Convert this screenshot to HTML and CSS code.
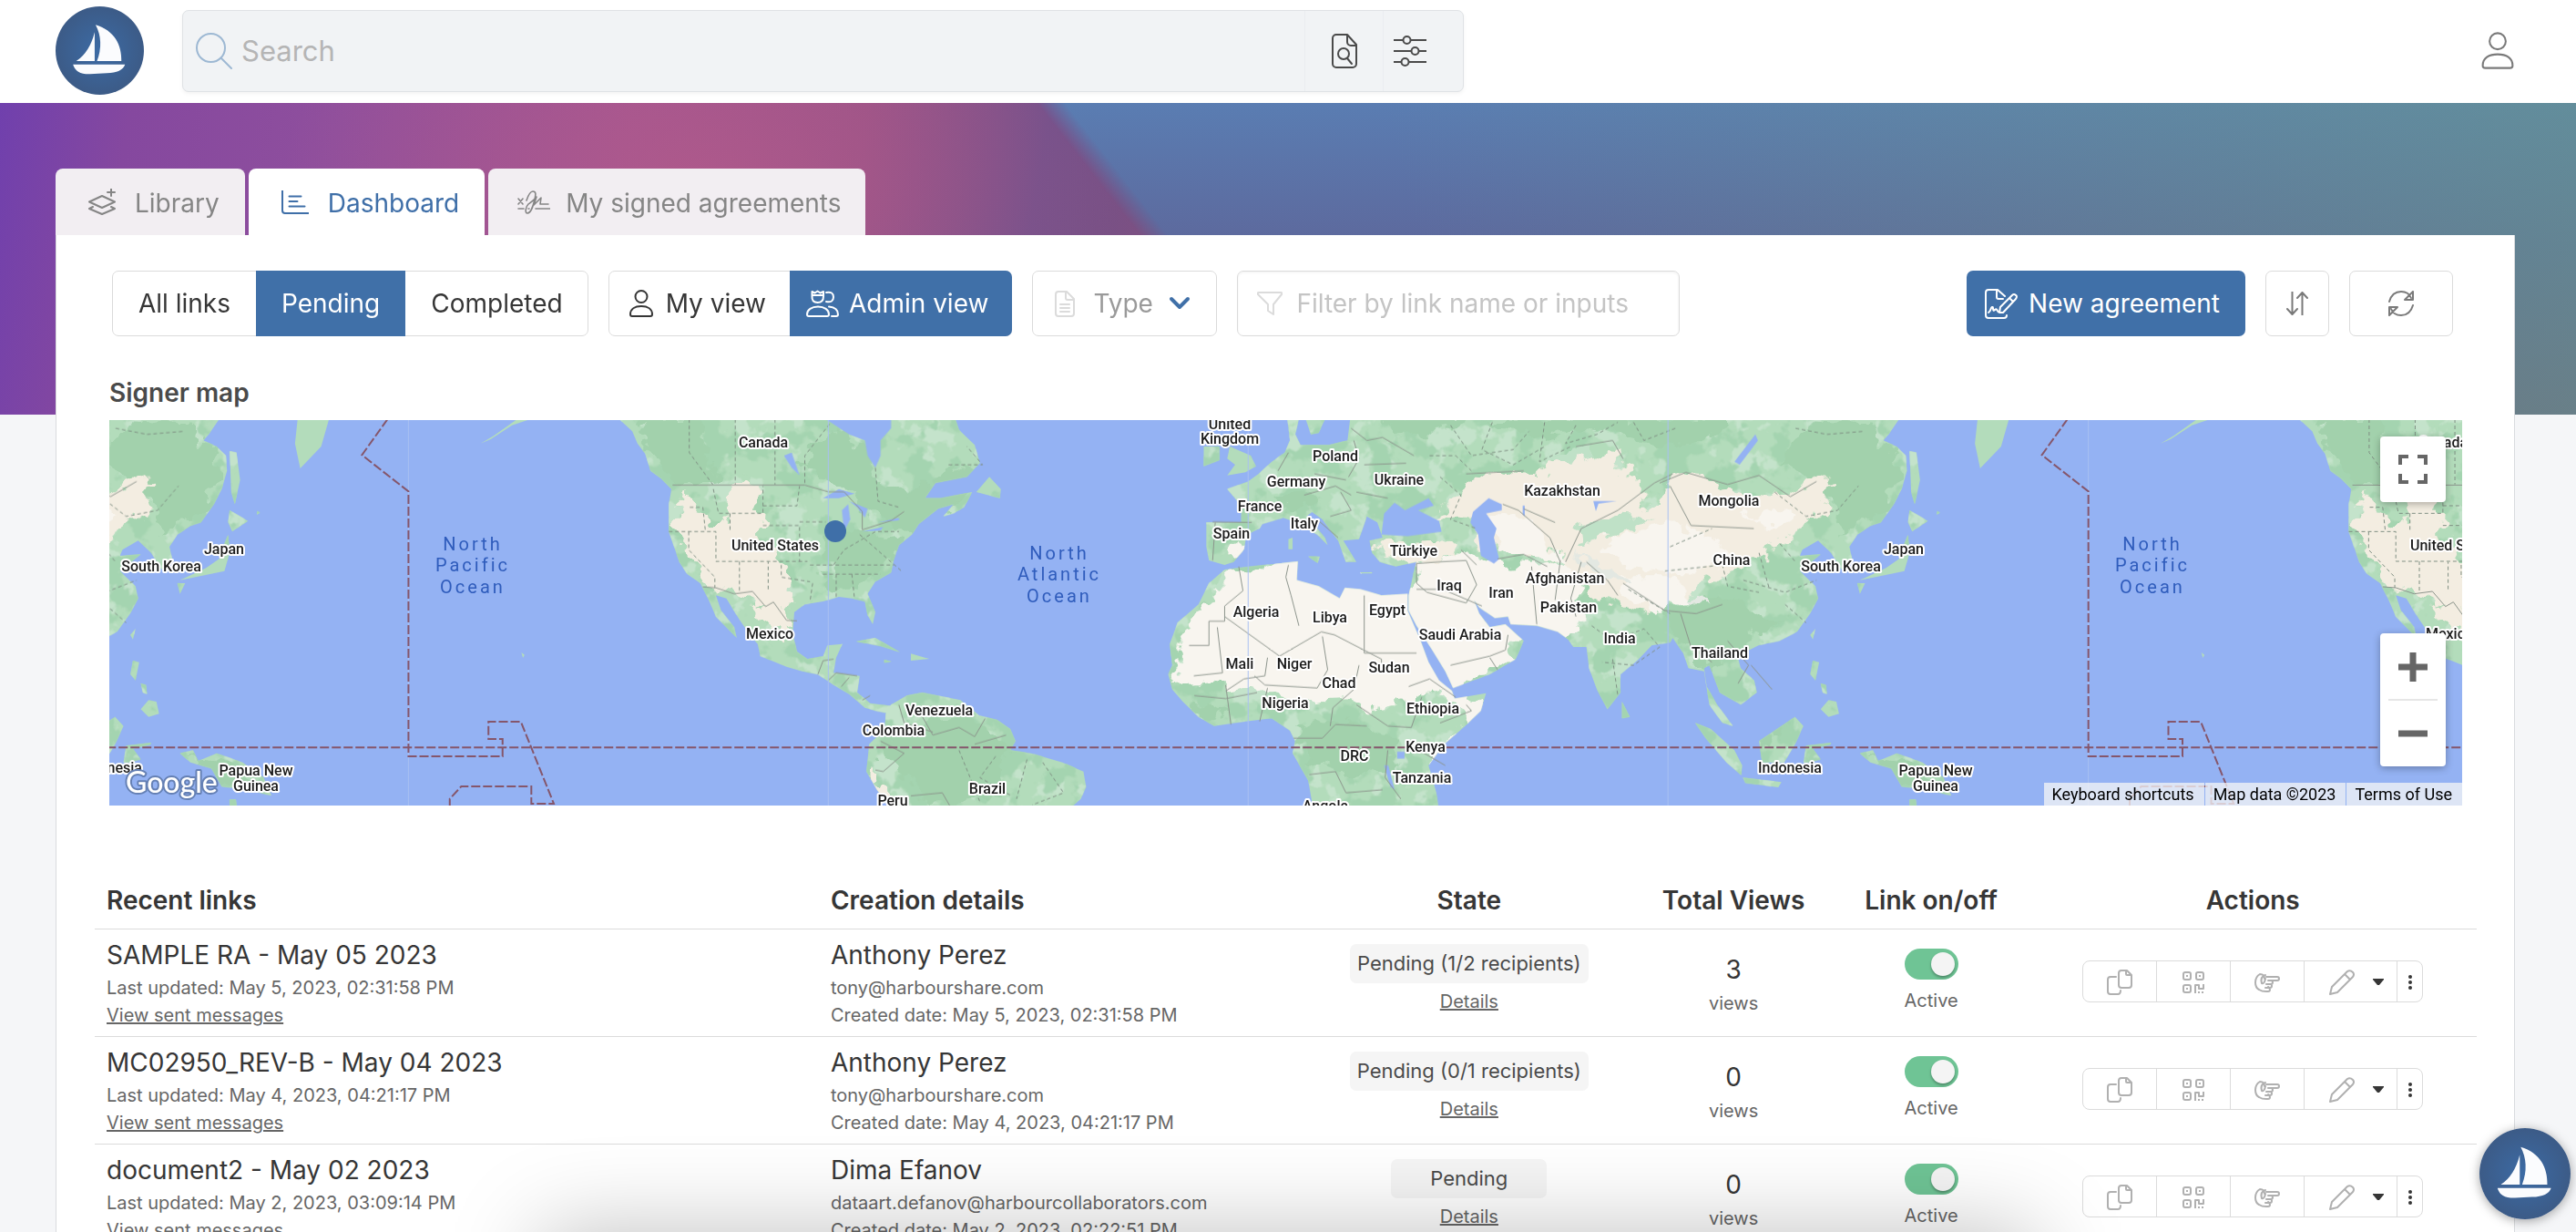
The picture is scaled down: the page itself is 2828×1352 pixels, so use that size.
FILE: index.html
```html
<!DOCTYPE html>
<html lang="en">
<head>
<meta charset="utf-8">
<title>Dashboard</title>
<link rel="stylesheet" href="styles.css">
</head>
<body>
<svg class="sprite" aria-hidden="true">
  <defs>
    <radialGradient id="disc"><stop offset="0" stop-color="#3c6ba5"/><stop offset="1" stop-color="#3c5b87"/></radialGradient>
    <symbol id="i-boat" viewBox="0 0 96 96">
      <circle cx="48" cy="48" r="48" fill="url(#disc)"/>
      <path fill="#fbfcfe" d="M42.500 28v31.500H22.500Q37 50 42.500 28zM43.500 20C64 26 72 42 71.500 59.500H45Q53 38 43.500 20zM19 63h56.500q-3 9-20 9.500l-18 1Q22 74 19 63z"/>
    </symbol>
    <symbol id="i-search" viewBox="0 0 40 40"><circle cx="16.500" cy="16.500" r="15.500"/><path d="M27.500 27.500 39 39"/></symbol>
    <symbol id="i-filesearch" viewBox="0 0 28 38"><path d="M17 1H5a4 4 0 0 0-4 4v28a4 4 0 0 0 4 4h18a4 4 0 0 0 4-4V12zM17 1v8a4 4 0 0 0 4 4h6"/><circle cx="13" cy="22" r="6"/><path d="m17 27 5 6"/></symbol>
    <symbol id="i-sliders" viewBox="0 0 36 34"><path d="M0 5h10m9 0h17M0 17h19m9 0h8M0 29h8m9 0h19"/><circle cx="14.500" cy="5" r="4"/><circle cx="23.500" cy="17" r="4"/><circle cx="12.500" cy="29" r="4"/></symbol>
    <symbol id="i-user" viewBox="0 0 26 30"><circle cx="13" cy="7.500" r="6.500"/><path d="M1 27c0-6 5-9 12-9s12 3 12 9q0 2-2 2H3q-2 0-2-2z"/></symbol>
    <symbol id="i-admin" viewBox="0 0 36 30"><path d="M6.500 2 9.500 3.500 12.500 1.500 15.500 3.500 19 2V7q0 7-6.500 7T6.500 7zM6.500 6h12.500M1 27c0-5 5-8.500 12-8.500S25 22 25 27q0 2-2 2H3q-2 0-2-2zM22 3q8-1.500 8 5t-8 5M25 18.500q10 1 10 8.500 0 2-2 2h-5"/></symbol>
    <symbol id="i-layers" viewBox="0 0 30 29"><path d="M1 14.500 15 8l14 6.500L15 21zM5 20l-4 2 14 6 14-6-4-2M25 0v8M21 4h8"/></symbol>
    <symbol id="i-chart" viewBox="0 0 30 26"><path d="M1 0v22q0 3 3 3h26M8.500 6.500h13M8.500 12h9M8.500 17.500h17"/></symbol>
    <symbol id="i-sign" viewBox="0 0 36 26"><path d="m1 9 5 6m0-6-5 6M1 20h6M12 20h1M20 20h16M10 11c2-6 4-10 7-10 4 0 3 4 2 9-2 8-4 15-8 15-3 0-2-7 1-10 3-2 5-3 9-8l-3 9 8-8-1 7h9"/></symbol>
    <symbol id="i-file" viewBox="0 0 22 29"><path d="M13 1H4a3 3 0 0 0-3 3v21a3 3 0 0 0 3 3h14a3 3 0 0 0 3-3V9zM12 1v7a2 2 0 0 0 2 2h7M6 15h10M6 19h10M6 23h10"/></symbol>
    <symbol id="i-funnel" viewBox="0 0 28 26"><path d="M2 1h24q2 0 1 2L18 14v11l-6-4v-7L1 3Q0 1 2 1z"/></symbol>
    <symbol id="i-chevron" viewBox="0 0 24 16"><path d="m3 3 9 9 9-9"/></symbol>
    <symbol id="i-newdoc" viewBox="0 0 36 33"><path d="M14 1H4a3 3 0 0 0-3 3v25a3 3 0 0 0 3 3h17a3 3 0 0 0 3-3M14 1l8 7M13 1v8q0 2 2 2h5M4 26c3-2 2-5 4-6s0 6 3 3 2 3 5 3h4l14-15q2-3 0-4-2-2-4 0L17 20l-1 6M27 10l4 4"/></symbol>
    <symbol id="i-sort" viewBox="0 0 24 26"><path d="M6.500 0v24M1 19l5.500 6L12 19M17.500 26V2M12 7l5.500-6L23 7"/></symbol>
    <symbol id="i-refresh" viewBox="0 0 30 28"><path d="M2 12C4 5 9 1 15 1c5 0 9 2 11 7M28 1v9h-9zM28 16c-2 7-7 11-13 11-5 0-9-2-11-7M2 27v-9h9z"/></symbol>
    <symbol id="i-copy" viewBox="0 0 28 28"><path d="M13 5V4a3 3 0 0 1 3-3h6l5 5v11a3 3 0 0 1-3 3h-8a3 3 0 0 1-3-3zM21 1v4q0 1 1 1h5M10 8H4a3 3 0 0 0-3 3v13a3 3 0 0 0 3 3h8q3 0 3-4"/></symbol>
    <symbol id="i-qr" viewBox="0 0 24 24"><rect x="1" y="1" width="8" height="8" rx="2"/><rect x="15" y="1" width="8" height="8" rx="2"/><rect x="1" y="15" width="8" height="8" rx="2"/><path d="M4 5h2M18 5h2M4 19h2M14 24v-9h4v4h5v-5M17 23h2M21 23h2"/></symbol>
    <symbol id="i-hand" viewBox="0 0 28 22"><path d="M13 5h12q2 0 2 2t-2 2H15M11 7q0-5-5-5-5 3-5 9t4 8q3 2 8 2h2q2 0 2-2t-2-3M12 3q-6 2-4 9 3 1 4-5M15 9h3q2 0 2 2t-2 2h-5M13 13h5q1 0 1 2t-2 2h-5"/></symbol>
    <symbol id="i-pencil" viewBox="0 0 28 28"><path d="M1 27l2-8L20 2q3-2 6 1 2 2 0 5L9 25zM17 5l6 6"/></symbol>

    <!-- Uneven edges and mottled vegetation for the map -->
    <filter id="rough" filterUnits="userSpaceOnUse" x="900" y="40" width="2700" height="1320">
      <feTurbulence type="fractalNoise" baseFrequency=".03 .018" numOctaves="3" seed="4"/>
      <feDisplacementMap in="SourceGraphic" scale="70" xChannelSelector="R" yChannelSelector="G"/>
    </filter>
    <filter id="mottle-dark" filterUnits="userSpaceOnUse" x="900" y="40" width="2700" height="1320" color-interpolation-filters="sRGB">
      <feTurbulence type="fractalNoise" baseFrequency=".018 .01" numOctaves="4" seed="11"/>
      <feColorMatrix values="0 0 0 0 .645  0 0 0 0 .83  0 0 0 0 .69  14 0 0 0 -7.300"/>
    </filter>
    <filter id="mottle-light" filterUnits="userSpaceOnUse" x="900" y="40" width="2700" height="1320" color-interpolation-filters="sRGB">
      <feTurbulence type="fractalNoise" baseFrequency=".022 .012" numOctaves="4" seed="27"/>
      <feColorMatrix values="0 0 0 0 .77  0 0 0 0 .89  0 0 0 0 .795  14 0 0 0 -7.600"/>
    </filter>

    <!-- Coastlines on a 3213-unit wide grid -->
    <g id="land" fill="#b3dcbb">
      <path d="M1010 60l25 40 10 40 15 35 10 55 20 25 20 35-5 50v90l10 50 10 50 15 40 25 30 15 50 15 60 20 35 20 35-5-35-25-55-10-50 20 10 25 70 22 55 13 25 5 40 50 35 30 15 30 10 30 35 30 30 30 45 20 10 30 10 5-25-45-10-25-35 5-55-50-10 5-50 12-45-29 5-8 35-30 10-20-25-8-60 3-70 20-25 35-10 30-15 25 5 25 10 5 45 10 30 5-40-15-60 15-40 30-30 5-40 10-50 25-35 13-35 37-50 30-15-20 40 20-10 20-20 15-50-30 10-30 10-30 0 20-50 60-20 25-45-10-60-30-50-10-50z"/>
      <path d="M1520 1030l10-30 30-30 30-10 73 25 35 50 35 15 25 30 10 40-10 30 40 10 60 30 40 30 5 50-10 40-20 30h-345l-25-60-20-60 5-90 30-50z"/>
      <path d="M745 140l20-15 40-45 35-20h-25l-45 55zM1463 792l37-12 47 47-37-20zM1568 832l35 17-35 6zM1517 852l14 6-14 4zM823 828l6 8-3 10zM1693 300l25-50 22 40-2 30z"/>
      <g transform="translate(1568)">
        <path d="M600 555l50-10 90-17-2 62 42 20 40 40 10-35 30 5 40 20 50-5v55l25 100 15 70 20 60 25 35 5 25 60-18-10 58-30 50-40 60-30 70 15 90 5 60H770l-10-100-30-90 5-40-10-35-35-40-50 10-60 15-30-30-30-50-20-40-8-50 8-30-5-70 15-70 40-60 20-70z"/>
        <path d="M600 540l-30-15-5-45v-80h67v-55l-27-55 40-25 20-25 25-40 25-30 10-40-5-70h22l-7 50 10 35h55l35-15 5-70h1050l-20 50-10 20 25 20 18 30 2 50-10 60-15 50-25 60-20 12-25 28-15 40 5 40-20 35-20-55-25-40-30 30-5 20 40-5-40 55 30 50 5 40-15 50-25 60-34 30-40 15-40 35 6 40 26 40 5 40-31 40-40-40-20-90-10 10 5 60 20 60 30 70-20-10-25-60-10-110-30-10-10-50-20-50-5 15-35 10-25 45-35 50v60l-25 55-20-65-15-70-5-70h-25l-10-25-20-25-40-20-50-5-5-25-25 5-30-35-10-25 10 45 20 45 30-10 35 55-15 60-50 50-70 45-15-55-25-70-30-80-15-50v-50l10-80 5-30-40 15-30-15-15-30-5-40 25-10-10-50-20-20-15 75-30 5 25 70h-20l-15-70-30-70-20-25-10 15 35 70 5 25-20-35-40-40-25-15-40 20-5 15-25 20-5 50-20 40z"/>
        <path d="M610 150l40 30 10 35-20 20-35 10 15-35-15-20zM560 150h30v45l-30 20zM755 60h37l-12 45-15 5zM722 455l8-5v38h-8zM760 512h22l-4 22zM860 564h22v4h-22zM1360 990l15 50-15 5zM1500 1060l30 20 45 70 15 50-2 32-28-42-40-80zM1591 1240l74 15-6 17-63-14zM1622 1120l69-80 16 30-16 60-21 60h-42zM1707 1190l5-55 48-10-2 7-33 13 15 35-20 10z"/>
        <g transform="translate(1645)">
          <path d="M265 360l35 35-30 35-8-30zM262 440l3 60-10 60-55 20-30 10 50-40 25-30 10-50zM165 600h15l-10 35zM265 165l13 5 7 90-10 80-7-40zM395 60h60l-15 90-40 72-10-82zM85 750l-5 35-5-15zM80 855l12 5-7 60-10-20zM95 930l10 5 2 30-8-5zM110 985l15 5 5 40-20 10-15-25zM170 1160l25-10 10 35 35-25 50 30 40 50 15 60-45-20-50-10-20-60-40-20zM265 1312h12l2 30h-14zM318 362l5 6-6 6z"/>
        </g>
      </g>
    </g>
    <mask id="onland" maskUnits="userSpaceOnUse" x="900" y="40" width="2700" height="1320"><use href="#land"/></mask>

    <g id="world">
      <use href="#land"/>
      <g mask="url(#onland)">
        <rect x="900" y="40" width="2700" height="1320" filter="url(#mottle-light)"/>
        <rect x="900" y="40" width="2700" height="1320" filter="url(#mottle-dark)"/>
        <!-- woodland -->
        <g fill="#a2d1ac" filter="url(#rough)">
          <path d="M1045 60h110l30 110 15 100h-80l-25-40-25-60zM1365 200l60-110 50 60 30 110 60 60 80-110 60 30-40 80-90 130-55-50-50-60-50-60zM1400 420l60 10 90 20-30 110-60 60-50-10zM1500 1150l60-90 110-20 60 60 30 80-30 120-120 30-70-120z"/>
          <g transform="translate(1568)">
            <path d="M900 60h160l-30 40-90 10zM1100 60h460l-30 60-90 40-60-50-110-20-60 40-70-50zM730 1080l60-30 80 20 60 40-20 110-80 10-70-50zM1450 690l100-60 60 60 60 40-100 80-40 90-70-130zM1720 70l130 10 40 140-20 130-90 90-20-130-90-110zM700 320l60-20 20 40-60 15zM530 990l80 30-40 40zM1590 1090l80-30-20 90zM1825 1165l100 40 50 80-80-30z"/>
          </g>
        </g>
        <!-- dry land -->
        <g fill="#f3ede1" filter="url(#rough)">
          <path d="M1150 300l15 60 20 60 30-20 5-130 40 0 25 50-5 120 45 30-10 60 25 60-5 80 5 90-30-30-25-60-50-40-40-5-35-80-30-60-5-80-10-50zM1270 660l30 30 25 70-12 45-15-60-30-30zM1480 1200l15 30 25 80-40 0z"/>
          <g transform="translate(1568)">
            <path fill="#f8f5ef" d="M595 575l47-12 110-50 90 60 120 40 10 80 25 100 15 70 20 60 20 35 32 40 60-30-20 78-30 70-40 60-30 70-30-50 10-70 60-50-10-60-60-70-30 40-100 30-20-40-100 10-90-30-70-30-85 10 8-40-5-70 15-70 40-60z"/>
            <path fill="#f8f5ef" d="M945 640l25-80 5-32 60-20 10-30 40 40 40 20 60 10 60-20 40 40-15 90 30 40-60 90-190 0 100 0-15 75-60 60-76 32-25-55-25-70-30-80-15-50z"/>
            <path d="M900 470l120-10 20 40-60 30-50 10-25-20zM1050 280l80-50 60 10 50-60 60 0 50-20 20 80 30 60-10 80-90 40-70 70-50 40-40-60-40 30-10-70-20-50-50 0-20 30zM1230 520l20-100 60-20 120-60 40-100 50 10 60 50 100 10 60-70 30 40-40 110-70 70-40 70-60 30-90 90-60 40-80-30-60-90z"/>
            <path fill="#f8f5ef" d="M1100 370l50 0 60 70 30 80-60 0-50-30-20-60zM1340 440l120-40 80 60 30 60-80 50-120-20-40-50zM1350 580l110 0 30 80-50 30-80-50zM1590 380l90-30 20 20-50 60zM605 490l30-30 8 40-25 25z"/>
            <path fill="#bfe1c7" d="M1270 420l90-40 60 10-80 50-60 40zM580 590l20-30 12 5-15 50zM1210 180l80-30 20 20-50 40z"/>
            <path fill="#e3e8e2" d="M1270 500l50 40 40 60-20 0-40-50zM1480 645l25 0 20 30-20 0z"/>
          </g>
        </g>
      </g>
      <!-- inland water -->
      <g fill="#94b2f3">
        <path d="M1405 60l45 50 30 20 5 50 15 40 10-40v-50l20-40v-30zM1325 180l15-10 15 75-15-25zM1400 320l30-30 30 15-30 15zM1436 360l12-20 4 50-12 40zM1450 330l35 25-5 30-15-35zM1475 430l40-15-5 12zM1505 400l40-15v8z"/>
        <g transform="translate(1568)">
          <path d="M905 370l20-35 20 25 45-40 10 25-30 15 40 35 5 35-65 15-50-5zM1075 365l30-45 25 20v20l-30 10 20 50-5 30 10 70-10 15-25-25-5-70-15-40zM1305 330h45l-35 8-5 25zM930 1155h14v22h-14zM905 1200l8 0 12 80-8-10zM1170 345l4 0 0 35-4-5zM1575 200l40-90 5 20-35 80z"/>
        </g>
      </g>
      <!-- national borders -->
      <g class="map-border">
        <path d="M1112 277h253l45 22 30 0 35 65 0 60 55-30 25-30M1170 612l25 3 35 20 35-8 25 50 15-15 25 60 20 2M1390 900l10-45 20-5M1410 920l15-25 40 10M1435 940l15-30M1475 985l15-15M1510 1120l45 40-40 60-15-5M1590 1040l20 60 50-25 30 30 20-60M1690 1130l60-30M1545 1000l10 60 55 30M1568 1300l60-10 20 60"/>
        <path d="M2195 545l8 80-35 50v35l105 130 10-10 70-70 25 10 90 80v40M2290 540l-5 40 10 60 15 100M2435 640v190h100M2168 710v15h-30v80h-38M2154 745l10 150-55 10M2250 845l-5 60-40 10-35 40M2355 775l10 110-20 60-100-10-20-30M2425 870l-10 80-40 60-5 60M2520 940l40-25 50 60M2420 1000l60 70 45 5 20-100M2250 945l-15 110M2300 1110h55l25-45 60 5M2330 1230l50-10 20 70 70-10M2480 1150l-5 90 30 70M2530 1140l60 60M2580 1060l60-40-10-20M2170 935l10 130M2110 970l60 10 60-20"/>
        <path d="M2535 535l40-5 55-5 20 80-20 60-75-35-20-30zM2535 620l50 0 75 55M2600 870l75-30 30-20 5-50M2675 845l15 40M2620 490l30 50M2690 520l50-15 45 40M2755 545l10 190M2810 525l-10 130M2850 530l-20 120 10 60M2700 340l30 20 60 90 20 80M2740 355l60 45M2820 530l30-110 70-60 70-90 35-30M2930 600l80 90 60 10 50-30M2860 530l40 60 20 50M3000 270l50-35 80 40 60-30 60 70 50-50M3020 280l40 130 120 10M2410 90l30 40 30-10 60 60M2415 130l10 60-20 60M2340 240l60 20M2320 310l60-30 30 30M2220 400l-75-2M2150 400l-5 125M2390 300l20 60-40 20M2420 300l60 20M2740 230l-110 10M2840 150l70-20 20 60M3040 700l20 110 40 50M3130 790l40 80-20 60M3175 870l40 80M2290 170l-20 60M2345 390l40 60M2435 210l80-5"/>
      </g>
      <!-- state and province borders -->
      <g class="map-region">
        <path d="M1144 60v110l45 105M1232 60v215M1308 60v215M1365 270v-90l50-110M1145 350h25l5 80M1105 430h90v98h175M1143 430v60l50 90 0 35M1190 290l10 80h85v-90M1285 345h65l5-65M1285 410h70v120M1240 528v100M1295 620v-90M1320 540v40l55 15M1222 370v60M1355 398h50M1375 540h160M1380 600l-5 60M1400 570h110M1425 570v80M1455 570l5 80M1420 540l20-50 60-60h45M1500 220l5 110 40 20M1470 440l80 120"/>
        <path d="M1660 1150l40 170M1730 1170l-30 70 60 60M1790 1180l-20 130M1820 1190l40 100-60 40M1640 210h65l-30-60M2600 80l40 100 80-20 30-60M2680 70l-20 90 60 50 60-60M2780 70l-10 130 60-50M2840 80l-20 60 60-30 40-40M2950 70l20 60 60-40M2580 250l40 60-20 80 50 30M2560 180l50 0 30 50M2870 740l40 50 60-40 30 60-50 60-60-10M2910 850l10 120M2940 620l80 80M3020 480l80-60M3010 560l110-20 10 70 60 20M3160 590l80 40 60-40M3190 500l20 120M3230 470l30 60M3240 670l40 60M3260 90l60 20 70-10M3220 300l60 80 60-20 40-80"/>
      </g>
    </g>
    <path id="dateline" d="M567 60l-49 118 89 120v872h180v-57h-27v-57h62l63 270h-43v-57H708l-22 41v30"/>
  </defs>
</svg>

<header class="topbar">
  <a class="brand" href="#" aria-label="Home"><svg><use href="#i-boat"/></svg></a>
  <form class="search" role="search">
    <label class="search-label" for="q"><svg class="ic ic-search"><use href="#i-search"/></svg></label>
    <input id="q" type="text" placeholder="Search" aria-label="Search">
    <button class="search-doc" type="button" aria-label="Search in documents"><svg class="ic ic-filesearch"><use href="#i-filesearch"/></svg></button>
    <button class="search-opts" type="button" aria-label="Search options"><svg class="ic ic-sliders"><use href="#i-sliders"/></svg></button>
  </form>
  <button class="account" type="button" aria-label="Account"><svg class="ic ic-account"><use href="#i-user"/></svg></button>
</header>

<main class="page">
  <nav class="tabs">
    <a class="tab" href="#"><svg class="ic ic-layers"><use href="#i-layers"/></svg>Library</a>
    <a class="tab tab-on" href="#" aria-current="page"><svg class="ic ic-chart"><use href="#i-chart"/></svg>Dashboard</a>
    <a class="tab tab-signed" href="#"><svg class="ic ic-sign"><use href="#i-sign"/></svg>My signed agreements</a>
  </nav>

  <section class="card">
    <div class="toolbar">
      <div class="segments">
        <button type="button">All links</button>
        <button type="button" class="on">Pending</button>
        <button type="button">Completed</button>
      </div>
      <div class="segments segments-icons">
        <button type="button"><svg class="ic ic-user"><use href="#i-user"/></svg>My view</button>
        <button type="button" class="on"><svg class="ic ic-admin"><use href="#i-admin"/></svg>Admin view</button>
      </div>
      <div class="field type">
        <label for="type" aria-label="Type"><svg class="ic ic-file"><use href="#i-file"/></svg></label>
        <select id="type"><option>Type</option></select>
        <svg class="ic ic-chevron"><use href="#i-chevron"/></svg>
      </div>
      <div class="field filter">
        <label for="filter" aria-label="Filter"><svg class="ic ic-funnel"><use href="#i-funnel"/></svg></label>
        <input id="filter" type="text" placeholder="Filter by link name or inputs">
      </div>
      <button class="primary" type="button"><svg class="ic ic-newdoc"><use href="#i-newdoc"/></svg>New agreement</button>
      <button class="square sort" type="button" aria-label="Sort"><svg class="ic ic-sort"><use href="#i-sort"/></svg></button>
      <button class="square refresh" type="button" aria-label="Refresh"><svg class="ic ic-refresh"><use href="#i-refresh"/></svg></button>
    </div>

    <h2 class="map-title">Signer map</h2>
    <div class="map">
      <svg class="map-canvas" viewBox="120 461 2583 423" preserveAspectRatio="xMidYMid slice">
        <rect x="120" y="461" width="2583" height="423" fill="#94b2f3"/>
        <g transform="translate(100 440) scale(.574 .33333)">
          <use href="#world" x="-3213"/><use href="#world"/><use href="#world" x="3213"/>
          <path class="map-seam" d="M607 60v1300M1410 60v1300M2213 60v1300M3016 60v1300M3820 60v1300"/>
          <g class="map-dash"><path d="M30 1141H4540"/><use href="#dateline"/><use href="#dateline" x="3213"/></g>
        </g>
        <g class="map-label">
          <text x="246" y="608">Japan</text><text x="177" y="627">South Korea</text><text x="281" y="851">Papua New</text><text x="281" y="868">Guinea</text><text x="121" y="848">Indonesia</text>
          <text x="838" y="491">Canada</text><text x="851" y="604">United States</text><text x="845" y="701">Mexico</text>
          <text x="1031" y="785">Venezuela</text><text x="981" y="807">Colombia</text><text x="1084" y="871">Brazil</text><text x="980" y="884">Peru</text>
          <text x="1350" y="471">United</text><text x="1350" y="487">Kingdom</text><text x="1466" y="506">Poland</text><text x="1423" y="534">Germany</text><text x="1383" y="561">France</text><text x="1432" y="580">Italy</text><text x="1352" y="591">Spain</text><text x="1536" y="532">Ukraine</text><text x="1552" y="610">Türkiye</text>
          <text x="1715" y="544">Kazakhstan</text><text x="1898" y="555">Mongolia</text><text x="1901" y="620">China</text><text x="1591" y="648">Iraq</text><text x="1648" y="656">Iran</text><text x="1718" y="640">Afghanistan</text><text x="1722" y="672">Pakistan</text>
          <text x="1379" y="677">Algeria</text><text x="1460" y="683">Libya</text><text x="1523" y="675">Egypt</text><text x="1603" y="702">Saudi Arabia</text><text x="1778" y="706">India</text><text x="1888" y="722">Thailand</text>
          <text x="1361" y="734">Mali</text><text x="1421" y="734">Niger</text><text x="1470" y="755">Chad</text><text x="1525" y="738">Sudan</text><text x="1411" y="777">Nigeria</text><text x="1573" y="783">Ethiopia</text><text x="1565" y="825">Kenya</text><text x="1487" y="835">DRC</text><text x="1561" y="859">Tanzania</text><text x="1455" y="890">Angola</text>
          <text x="2090" y="608">Japan</text><text x="2021" y="627">South Korea</text><text x="1965" y="848">Indonesia</text><text x="2125" y="851">Papua New</text><text x="2125" y="868">Guinea</text>
          <text x="2682" y="491">Canada</text><text x="2694" y="604">United States</text><text x="2689" y="701">Mexico</text>
        </g>
        <g class="map-ocean">
          <text x="519" y="604">North</text><text x="519" y="627">Pacific</text><text x="519" y="651">Ocean</text>
          <text x="1163" y="614">North</text><text x="1163" y="637">Atlantic</text><text x="1163" y="661">Ocean</text>
          <text x="2363" y="604">North</text><text x="2363" y="627">Pacific</text><text x="2363" y="651">Ocean</text>
        </g>
        <circle cx="917" cy="583" r="12" fill="#3f6fa8"/>
        <text class="map-logo" x="138" y="870">Google</text>
      </svg>
      <button class="map-full" type="button" aria-label="Toggle fullscreen"><svg viewBox="0 0 32 32"><path d="M2 11V2h9M21 2h9v9M30 21v9h-9M11 30H2v-9"/></svg></button>
      <div class="map-zoom">
        <button type="button" aria-label="Zoom in"><svg viewBox="0 0 32 32"><path d="M0 16h32M16 0v32"/></svg></button>
        <button type="button" aria-label="Zoom out"><svg viewBox="0 0 32 32"><path d="M0 16h32"/></svg></button>
      </div>
      <div class="map-legal"><button type="button">Keyboard shortcuts</button><span>Map data ©2023</span><a href="#">Terms of Use</a></div>
    </div>

    <table class="links">
      <colgroup><col class="c-name"><col class="c-made"><col class="c-state"><col class="c-views"><col class="c-toggle"><col class="c-actions"></colgroup>
      <thead>
        <tr><th class="left">Recent links</th><th class="left">Creation details</th><th>State</th><th>Total Views</th><th>Link on/off</th><th>Actions</th></tr>
      </thead>
      <tbody>
        <tr>
          <td class="left"><div class="title">SAMPLE RA - May 05 2023</div><div class="meta">Last updated: May 5, 2023, 02:31:58 PM</div><a class="meta" href="#">View sent messages</a></td>
          <td class="left"><div class="title">Anthony Perez</div><div class="meta">tony@harbourshare.com</div><div class="meta">Created date: May 5, 2023, 02:31:58 PM</div></td>
          <td><div class="stack state"><span class="badge">Pending (1/2 recipients)</span><a class="meta" href="#">Details</a></div></td>
          <td><div class="stack views"><span class="count">3</span><span class="meta">views</span></div></td>
          <td><label class="stack switch"><input type="checkbox" checked><span class="meta">Active</span></label></td>
          <td><div class="actions">
            <button type="button" aria-label="Copy"><svg class="ic ic-copy"><use href="#i-copy"/></svg></button>
            <button type="button" aria-label="QR code"><svg class="ic ic-qr"><use href="#i-qr"/></svg></button>
            <button type="button" aria-label="Open"><svg class="ic ic-hand"><use href="#i-hand"/></svg></button>
            <button type="button" class="edit" aria-label="Edit"><svg class="ic ic-pencil"><use href="#i-pencil"/></svg><svg class="caret" viewBox="0 0 12 7"><path d="M0 0h12v1L7 7H5L0 1z"/></svg></button>
            <button type="button" class="more" aria-label="More"><svg class="dots" viewBox="0 0 4 16"><circle cx="2" cy="2" r="2"/><circle cx="2" cy="8" r="2"/><circle cx="2" cy="14" r="2"/></svg></button>
          </div></td>
        </tr>
        <tr>
          <td class="left"><div class="title">MC02950_REV-B - May 04 2023</div><div class="meta">Last updated: May 4, 2023, 04:21:17 PM</div><a class="meta" href="#">View sent messages</a></td>
          <td class="left"><div class="title">Anthony Perez</div><div class="meta">tony@harbourshare.com</div><div class="meta">Created date: May 4, 2023, 04:21:17 PM</div></td>
          <td><div class="stack state"><span class="badge">Pending (0/1 recipients)</span><a class="meta" href="#">Details</a></div></td>
          <td><div class="stack views"><span class="count">0</span><span class="meta">views</span></div></td>
          <td><label class="stack switch"><input type="checkbox" checked><span class="meta">Active</span></label></td>
          <td><div class="actions">
            <button type="button" aria-label="Copy"><svg class="ic ic-copy"><use href="#i-copy"/></svg></button>
            <button type="button" aria-label="QR code"><svg class="ic ic-qr"><use href="#i-qr"/></svg></button>
            <button type="button" aria-label="Open"><svg class="ic ic-hand"><use href="#i-hand"/></svg></button>
            <button type="button" class="edit" aria-label="Edit"><svg class="ic ic-pencil"><use href="#i-pencil"/></svg><svg class="caret" viewBox="0 0 12 7"><path d="M0 0h12v1L7 7H5L0 1z"/></svg></button>
            <button type="button" class="more" aria-label="More"><svg class="dots" viewBox="0 0 4 16"><circle cx="2" cy="2" r="2"/><circle cx="2" cy="8" r="2"/><circle cx="2" cy="14" r="2"/></svg></button>
          </div></td>
        </tr>
        <tr>
          <td class="left"><div class="title">document2 - May 02 2023</div><div class="meta">Last updated: May 2, 2023, 03:09:14 PM</div><a class="meta" href="#">View sent messages</a></td>
          <td class="left"><div class="title">Dima Efanov</div><div class="meta">dataart.defanov@harbourcollaborators.com</div><div class="meta">Created date: May 2, 2023, 02:22:51 PM</div></td>
          <td><div class="stack state"><span class="badge">Pending</span><a class="meta" href="#">Details</a></div></td>
          <td><div class="stack views"><span class="count">0</span><span class="meta">views</span></div></td>
          <td><label class="stack switch"><input type="checkbox" checked><span class="meta">Active</span></label></td>
          <td><div class="actions">
            <button type="button" aria-label="Copy"><svg class="ic ic-copy"><use href="#i-copy"/></svg></button>
            <button type="button" aria-label="QR code"><svg class="ic ic-qr"><use href="#i-qr"/></svg></button>
            <button type="button" aria-label="Open"><svg class="ic ic-hand"><use href="#i-hand"/></svg></button>
            <button type="button" class="edit" aria-label="Edit"><svg class="ic ic-pencil"><use href="#i-pencil"/></svg><svg class="caret" viewBox="0 0 12 7"><path d="M0 0h12v1L7 7H5L0 1z"/></svg></button>
            <button type="button" class="more" aria-label="More"><svg class="dots" viewBox="0 0 4 16"><circle cx="2" cy="2" r="2"/><circle cx="2" cy="8" r="2"/><circle cx="2" cy="14" r="2"/></svg></button>
          </div></td>
        </tr>
      </tbody>
    </table>
  </section>
</main>

<div class="dock-shadow"></div>
<button class="chat" type="button" aria-label="Help"><svg><use href="#i-boat"/></svg></button>
</body>
</html>
```
FILE: styles.css
```css
* { box-sizing: border-box; }

body {
  margin: 0;
  height: 100vh;
  display: flex;
  flex-direction: column;
  overflow: hidden;
  background: #f5f6f8;
  color: #363636;
  font-family: Inter, "Liberation Sans", sans-serif;
  font-size: 28px;
}

button, input, select { font: inherit; color: inherit; }
button { cursor: pointer; padding: 0; margin: 0; border: 0; background: none; }
a { color: inherit; }
.sprite { position: absolute; width: 0; height: 0; }
.ic { display: block; flex: none; fill: none; stroke: currentColor; stroke-width: 2; stroke-linecap: round; stroke-linejoin: round; overflow: visible; }

/* Top bar */
.topbar {
  flex: none;
  height: 113px;
  padding: 0 68px 2px 61px;
  display: flex;
  align-items: center;
  background: #fff;
}
.brand { width: 97px; height: 97px; margin-right: 42px; }
.brand svg, .chat svg { display: block; width: 100%; height: 100%; }
.search {
  width: 1407px;
  height: 90px;
  display: flex;
  align-items: stretch;
  background: #f1f3f5;
  border: 1px solid #dfe2e5;
  border-radius: 7px;
  box-shadow: 0 2px 4px rgba(0, 0, 0, .05);
}
.search-label { display: flex; align-items: center; padding: 0 10px 0 14px; color: #9db8d3; }
.ic-search { width: 40px; height: 40px; }
.search input { flex: 1; min-width: 0; border: 0; padding: 0; background: none; font-size: 31px; outline: 0; }
.search input::placeholder { color: #b5b5b5; opacity: 1; }
.search button { display: flex; align-items: center; border-left: 1px solid #ebedf0; color: #4a4a4a; }
.search-doc { width: 86px; padding-left: 29px; }
.search-opts { width: 88px; padding-left: 11px; }
.ic-filesearch { width: 28px; height: 38px; }
.ic-sliders { width: 36px; height: 34px; }
.account { margin-left: auto; color: #7a7a7a; }
.ic-account { width: 36px; height: 41px; stroke-width: 1.5; }

/* Page with the coloured banner behind the card */
.page { position: relative; flex: 1; min-height: 0; padding: 72px 67px 0 61px; overflow-y: auto; scrollbar-width: none; }
.page::before, .page::after { content: ""; position: absolute; z-index: -1; top: 0; left: 0; right: 0; height: 342px; }
.page::before {
  z-index: -2;
  background:
    radial-gradient(460px 300px at 770px 90px, rgba(180, 91, 138, .75), transparent),
    linear-gradient(100deg, #7040ad 0, #85489f 5%, #8f4f9d 13%, #9f5492 24%, #955287 33%, #72518b 40%, #80507f 46%);
}
.page::after {
  background:
    linear-gradient(75deg, transparent 55%, rgba(104, 152, 140, .6)),
    linear-gradient(180deg, #5a7db2, #5d699d 45%, #6a6083);
  -webkit-mask-image: linear-gradient(52deg, transparent 45.4%, #000 46.4%);
  mask-image: linear-gradient(52deg, transparent 45.4%, #000 46.4%);
}

.tabs { display: flex; gap: 4px; }
.tab {
  height: 73px;
  padding: 2px 28px 0 36px;
  display: flex;
  align-items: center;
  gap: 21px;
  border-radius: 8px 8px 0 0;
  background: #f2eef2;
  color: #858585;
  text-decoration: none;
  white-space: nowrap;
}
.tab-on { background: #fff; color: #3f6fa8; }
.tab-signed { gap: 17px; padding: 2px 26px 0 32px; }
.ic-layers { width: 30px; height: 29px; }
.ic-chart { width: 30px; height: 26px; }
.ic-sign { width: 36px; height: 26px; stroke-width: 1.6; }
.tab .ic { margin-top: -2px; }

.card { min-height: 1094px; padding: 39px 57px 0 58px; background: #fff; border: solid #d9dbde; border-width: 0 1px; }

/* Toolbar */
.toolbar { display: flex; align-items: stretch; gap: 22px; height: 72px; padding: 0 10px 0 3px; }
.segments { display: flex; border: 1px solid #dbdbdb; border-radius: 7px; }
.segments button { display: flex; align-items: center; justify-content: center; margin: -1px 0; padding: 0 28px; white-space: nowrap; }
.segments button:last-child { margin-right: -1px; border-radius: 0 7px 7px 0; }
.segments .on { background: #4070a8; color: #fff; }
.segments-icons button { padding: 0 26px 0 22px; gap: 14px; }
.segments-icons .on { padding-left: 18px; gap: 11px; }
.ic-user { width: 26px; height: 30px; }
.ic-admin { width: 36px; height: 30px; }
.field { display: flex; align-items: center; border: 1px solid #dbdbdb; border-radius: 7px; color: #dbdbdb; }
.field select, .field input { border: 0; padding: 0; background: none; outline: 0; }
.type { width: 203px; padding: 0 28px 0 24px; }
.type select { appearance: none; flex: 1; min-width: 0; margin-left: 20px; color: #9a9a9a; }
.ic-file { width: 22px; height: 29px; }
.ic-chevron { width: 24px; height: 16px; color: #4070a8; stroke-width: 4; }
.filter { width: 486px; padding: 0 20px 0 21px; box-shadow: inset 0 1px 3px rgba(0, 0, 0, .06); }
.filter input { flex: 1; min-width: 0; margin-left: 15px; }
.filter input::placeholder { color: #c4c4c4; opacity: 1; }
.ic-funnel { width: 28px; height: 26px; }
.primary { margin-left: auto; display: flex; align-items: center; gap: 12px; padding: 0 28px 0 20px; border-radius: 7px; background: #4070a8; color: #fff; white-space: nowrap; }
.ic-newdoc { width: 36px; height: 33px; }
.square { display: flex; align-items: center; justify-content: center; border: 1px solid #dbdbdb; border-radius: 7px; color: #7a7a7a; }
.sort { width: 70px; }
.refresh { width: 114px; }
.ic-sort { width: 24px; height: 26px; }
.ic-refresh { width: 30px; height: 28px; }

/* Map */
.map-title { margin: 44px 0 12px; font-size: 28px; line-height: 36px; font-weight: 600; color: #4a4a4a; }
.map { position: relative; height: 423px; overflow: hidden; }
.map-canvas { display: block; width: 100%; height: 100%; }
.map-border path, .map-region path, .map-seam, .map-dash path, #dateline { fill: none; vector-effect: non-scaling-stroke; }
.map-border { stroke: #8c948c; stroke-width: 1; }
.map-region { stroke: #7f8f83; stroke-width: 1; stroke-dasharray: 4 3; }
.map-seam { stroke: #a9c0f2; stroke-width: 1; }
.map-dash { stroke: #85566b; stroke-width: 2; stroke-dasharray: 10 3; }
#onland { mask-type: alpha; }
.map-label text { font: 500 16px Roboto, sans-serif; text-anchor: middle; fill: #1c1c1c; stroke: #fff; stroke-width: 4px; stroke-linejoin: round; paint-order: stroke; }
.map-ocean text { font: 400 20px Roboto, sans-serif; text-anchor: middle; fill: #2f5cbc; letter-spacing: 3px; }
.map-logo { font: 500 32px Lato, sans-serif; fill: #fff; stroke: #6580b4; stroke-width: 4px; stroke-linejoin: round; paint-order: stroke; }
.map-full, .map-zoom { position: absolute; right: 18px; width: 72px; background: #fff; border-radius: 4px; box-shadow: 0 2px 8px rgba(0, 0, 0, .3); }
.map-full { top: 18px; height: 72px; }
.map-zoom { bottom: 43px; }
.map-zoom button { display: block; width: 100%; height: 73px; }
.map-zoom button + button { position: relative; }
.map-zoom button + button::before { content: ""; position: absolute; left: 9px; right: 9px; top: -1px; height: 2px; background: #e6e6e6; }
.map-full svg, .map-zoom svg { display: block; width: 32px; height: 32px; margin: 0 auto; fill: none; stroke: #666; stroke-width: 4; }
.map-zoom svg { stroke-width: 7; }
.map-legal { position: absolute; right: 0; bottom: 0; display: flex; gap: 1px; font: 400 18px/25px Roboto, sans-serif; color: #000; }
.map-legal > * { padding: 0 11px 0 9px; background: rgba(245, 245, 245, .75); font: inherit; text-decoration: none; }

/* Links table */
.links { width: calc(100% + 32px); margin: 74px -16px 0; border-collapse: collapse; table-layout: fixed; }
.c-name { width: 30.4%; }
.c-made { width: 20.4%; }
.c-state { width: 13.8%; }
.c-views { width: 8.4%; }
.c-toggle { width: 8.2%; }
.c-actions { width: 18.8%; }
.links th { height: 61px; padding: 0; font-weight: 600; }
.links td { height: 118px; padding: 10px 0 0; vertical-align: top; text-align: center; }
.links .left { padding-left: 13px; text-align: left; }
.links tr { border-bottom: 1px solid #dbdbdb; }
.title { line-height: 36px; }
.meta { display: block; font-size: 20px; line-height: 30px; color: #666; }
.title + .meta { margin-top: 4px; line-height: 29px; }
.stack { display: flex; flex-direction: column; align-items: center; }
.state { padding-top: 6px; gap: 5px; }
.badge { min-width: 171px; padding: 0 8px; border-radius: 7px; background: #f5f5f5; color: #4a4a4a; font-size: 22px; line-height: 43px; }
.views { padding-top: 16px; gap: 4px; }
.count { line-height: 36px; }
.switch { padding-top: 11px; gap: 8px; }
.switch input { appearance: none; margin: 0; width: 59px; height: 34px; border-radius: 17px; background: #6fc495; }
.switch input::before { content: ""; display: block; width: 26px; height: 26px; margin: 4px 0 0 29px; border-radius: 50%; background: #f4f4f4; box-shadow: 0 2px 3px rgba(0, 0, 0, .3); }
.actions { display: inline-flex; width: 374px; height: 46px; margin-top: 24px; border: 1px solid #dbdbdb; border-radius: 8px; color: #b0b0b0; }
.actions button { flex: 1; display: flex; align-items: center; justify-content: center; }
.actions button + button { border-left: 1px solid #dbdbdb; }
.actions .edit { flex: none; width: 102px; padding-left: 12px; gap: 20px; }
.actions .more { flex: none; width: 28px; }
.actions svg { margin-top: 2px; }
.ic-copy, .ic-pencil { width: 28px; height: 28px; }
.ic-qr { width: 24px; height: 24px; stroke-linecap: butt; }
.ic-hand { width: 28px; height: 22px; }
.caret { width: 12px; height: 7px; fill: #363636; }
.dots { width: 4px; height: 16px; fill: #363636; }

/* Floating pieces */
.dock-shadow { position: fixed; left: 21%; right: 21%; top: 100%; height: 300px; box-shadow: 0 0 100px rgba(0, 0, 0, .25); pointer-events: none; }
.chat { position: fixed; right: 6px; bottom: 14px; width: 100px; height: 100px; border-radius: 50%; box-shadow: 0 2px 12px rgba(0, 0, 0, .35); }
```
